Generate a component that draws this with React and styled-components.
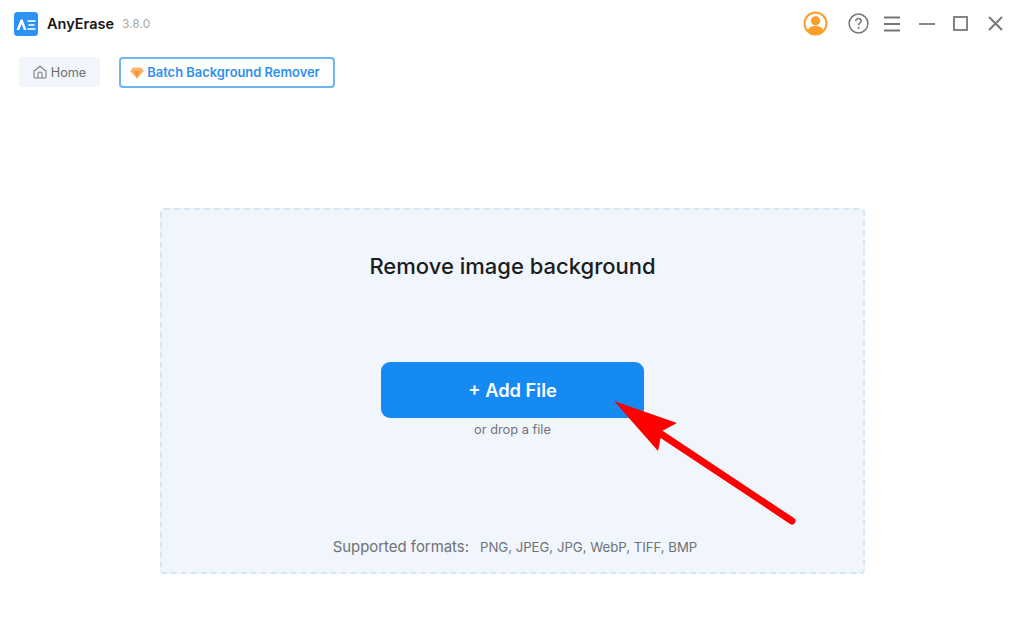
import React from 'react'
import styled, { createGlobalStyle } from 'styled-components'

const Global = createGlobalStyle`
	html, body { margin: 0; padding: 0; background: #fff; }
	body { font-family: Inter, "Noto Sans", sans-serif; }
`

const Page = styled.div`
	position: relative;
	width: 1024px;
	height: 639px;
	overflow: hidden;
	background: #fff;
	display: flex;
	flex-direction: column;
`

const TitleBar = styled.header`
	height: 47px;
	display: flex;
	align-items: center;
	justify-content: space-between;
	padding: 0 21px 0 14px;
`

const Brand = styled.div`
	display: flex;
	align-items: center;
`

const Logo = styled.svg`
	width: 24px;
	height: 24px;
	display: block;
`

const AppName = styled.span`
	margin-left: 9px;
	font-size: 14.5px;
	font-weight: 600;
	color: #16181c;
`

const Version = styled.span`
	margin-left: 8px;
	font-size: 12px;
	color: #a9a9ab;
`

const Controls = styled.div`
	display: flex;
	align-items: center;
`

const ControlIcon = styled.svg`
	display: block;
	margin-left: ${p => p.$gap}px;
	width: ${p => p.$size}px;
	height: ${p => p.$size}px;
`

const Tabs = styled.nav`
	display: flex;
	align-items: flex-start;
	gap: 19px;
	padding: 10px 0 0 19px;
`

const HomeTab = styled.button`
	width: 81px;
	height: 30px;
	border: none;
	border-radius: 4px;
	background: #f0f6fb;
	display: flex;
	align-items: center;
	justify-content: center;
	gap: 4px;
	padding: 0;
	font: 400 12.7px Inter, sans-serif;
	color: #6b6f74;
`

const BatchTab = styled.button`
	width: 216px;
	height: 31px;
	box-sizing: border-box;
	border: 2px solid #6db5f3;
	border-radius: 4px;
	background: #fff;
	display: flex;
	align-items: center;
	justify-content: center;
	gap: 3px;
	padding: 0 4px 0 0;
	font: 600 12.9px Inter, sans-serif;
	color: #2f90ee;
`

const Main = styled.main`
	padding: 120px 0 0 160px;
`

const DropZone = styled.section`
	box-sizing: border-box;
	width: 705px;
	height: 366px;
	background: #f0f6fb;
	border: 2px dashed #d6e7f5;
	border-radius: 4px;
	display: flex;
	flex-direction: column;
	align-items: center;
`

const Heading = styled.h1`
	margin: 42px 0 0;
	font-size: 22px;
	line-height: 28px;
	font-weight: 500;
	color: #1b1d20;
`

const AddButton = styled.button`
	margin-top: 82px;
	width: 263px;
	height: 56px;
	border: none;
	border-radius: 9px;
	background: #168af3;
	color: #fff;
	font: 600 18.3px Inter, sans-serif;
`

const DropHint = styled.div`
	margin-top: 3px;
	font-size: 12.8px;
	line-height: 18px;
	color: #70747a;
`

const Formats = styled.div`
	margin-top: auto;
	margin-bottom: 15px;
	margin-left: 5px;
	display: flex;
	gap: 11px;
	font-size: 13.2px;
	line-height: 20px;
	color: #6e7176;
`

const FormatsLabel = styled.span`
	font-size: 14.9px;
`

const Arrow = styled.svg`
	position: absolute;
	left: 0;
	top: 0;
	width: 1024px;
	height: 639px;
	pointer-events: none;
`

const App = () => (
	<Page>
		<Global/>
		<TitleBar>
			<Brand>
				<Logo viewBox="0 0 24 24">
					<rect width="24" height="24" rx="3.5" fill="#2b93f3"/>
					<path d="M2.5 18 L6.6 7.5 h2 L12.5 18 h-2.6 L7.6 12 L5.2 18 Z" fill="#fff"/>
					<path d="M13.5 8 h8 v2 h-8 Z M14.5 12 h6 v2 h-6 Z M13.5 16 h8 v2 h-8 Z" fill="#cfe7fd"/>
				</Logo>
				<AppName>AnyErase</AppName>
				<Version>3.8.0</Version>
			</Brand>
			<Controls>
				<ControlIcon $size={25} $gap={0} viewBox="0 0 25 25">
					<circle cx="12.5" cy="12.5" r="11" fill="#fff" stroke="#fb9f27" strokeWidth="2"/>
					<circle cx="12.5" cy="9.8" r="4.6" fill="#fb9f27"/>
					<path d="M4.5 20 C6 15.5 9.5 15 12.5 15 C15.5 15 19 15.5 20.5 20 C18.5 22.5 15.5 23.5 12.5 23.5 C9.5 23.5 6.5 22.5 4.5 20 Z" fill="#fb9f27"/>
				</ControlIcon>
				<ControlIcon $size={21} $gap={20} viewBox="0 0 21 21">
					<circle cx="10.5" cy="10.5" r="9.4" fill="none" stroke="#777" strokeWidth="1.5"/>
					<path d="M7.8 8.2 C7.8 6.6 9 5.6 10.5 5.6 C12 5.6 13.2 6.6 13.2 8 C13.2 9.8 10.6 10 10.6 12.3" fill="none" stroke="#777" strokeWidth="1.5"/>
					<circle cx="10.6" cy="15" r="1" fill="#777"/>
				</ControlIcon>
				<ControlIcon $size={18} $gap={14} viewBox="0 0 18 18">
					<path d="M1 2.5 h16 M1 9 h16 M1 15.5 h16" stroke="#777" strokeWidth="1.8" fill="none"/>
				</ControlIcon>
				<ControlIcon $size={16} $gap={18} viewBox="0 0 16 16">
					<path d="M0 8 h16" stroke="#777" strokeWidth="1.8" fill="none"/>
				</ControlIcon>
				<ControlIcon $size={15} $gap={18} viewBox="0 0 15 15">
					<rect x="1" y="1" width="13" height="13" stroke="#777" strokeWidth="1.8" fill="none"/>
				</ControlIcon>
				<ControlIcon $size={15} $gap={20} viewBox="0 0 15 15">
					<path d="M1 1 L14 14 M14 1 L1 14" stroke="#777" strokeWidth="1.9" fill="none"/>
				</ControlIcon>
			</Controls>
		</TitleBar>
		<Tabs>
			<HomeTab>
				<svg width="14" height="14" viewBox="0 0 14 14" fill="none" stroke="#7b7f84" strokeWidth="1.1">
					<path d="M1 6 L7 1.2 L13 6 V12 a1 1 0 0 1 -1 1 H2 a1 1 0 0 1 -1 -1 Z"/>
					<path d="M5 13 V9 a2 2 0 0 1 4 0 V13"/>
				</svg>
				Home
			</HomeTab>
			<BatchTab>
				<svg width="14" height="12" viewBox="0 0 14 12">
					<path d="M3 0.5 H11 L14 4 L7 11.5 L0 4 Z" fill="#fbb26a"/>
					<path d="M3.8 4 H10.2 L7 11.5 Z" fill="#f8963d"/>
				</svg>
				Batch Background Remover
			</BatchTab>
		</Tabs>
		<Main>
			<DropZone>
				<Heading>Remove image background</Heading>
				<AddButton>+ Add File</AddButton>
				<DropHint>or drop a file</DropHint>
				<Formats>
					<FormatsLabel>Supported formats:</FormatsLabel>
					<span>PNG, JPEG, JPG, WebP, TIFF, BMP</span>
				</Formats>
			</DropZone>
		</Main>
		<Arrow viewBox="0 0 1024 639">
			<path d="M614 401 L677 423 L662 431 L658 451 Z" fill="#fe0000"/>
			<path d="M655 430 L792 521" stroke="#fe0000" strokeWidth="7" strokeLinecap="round" fill="none"/>
		</Arrow>
	</Page>
)

export default App
